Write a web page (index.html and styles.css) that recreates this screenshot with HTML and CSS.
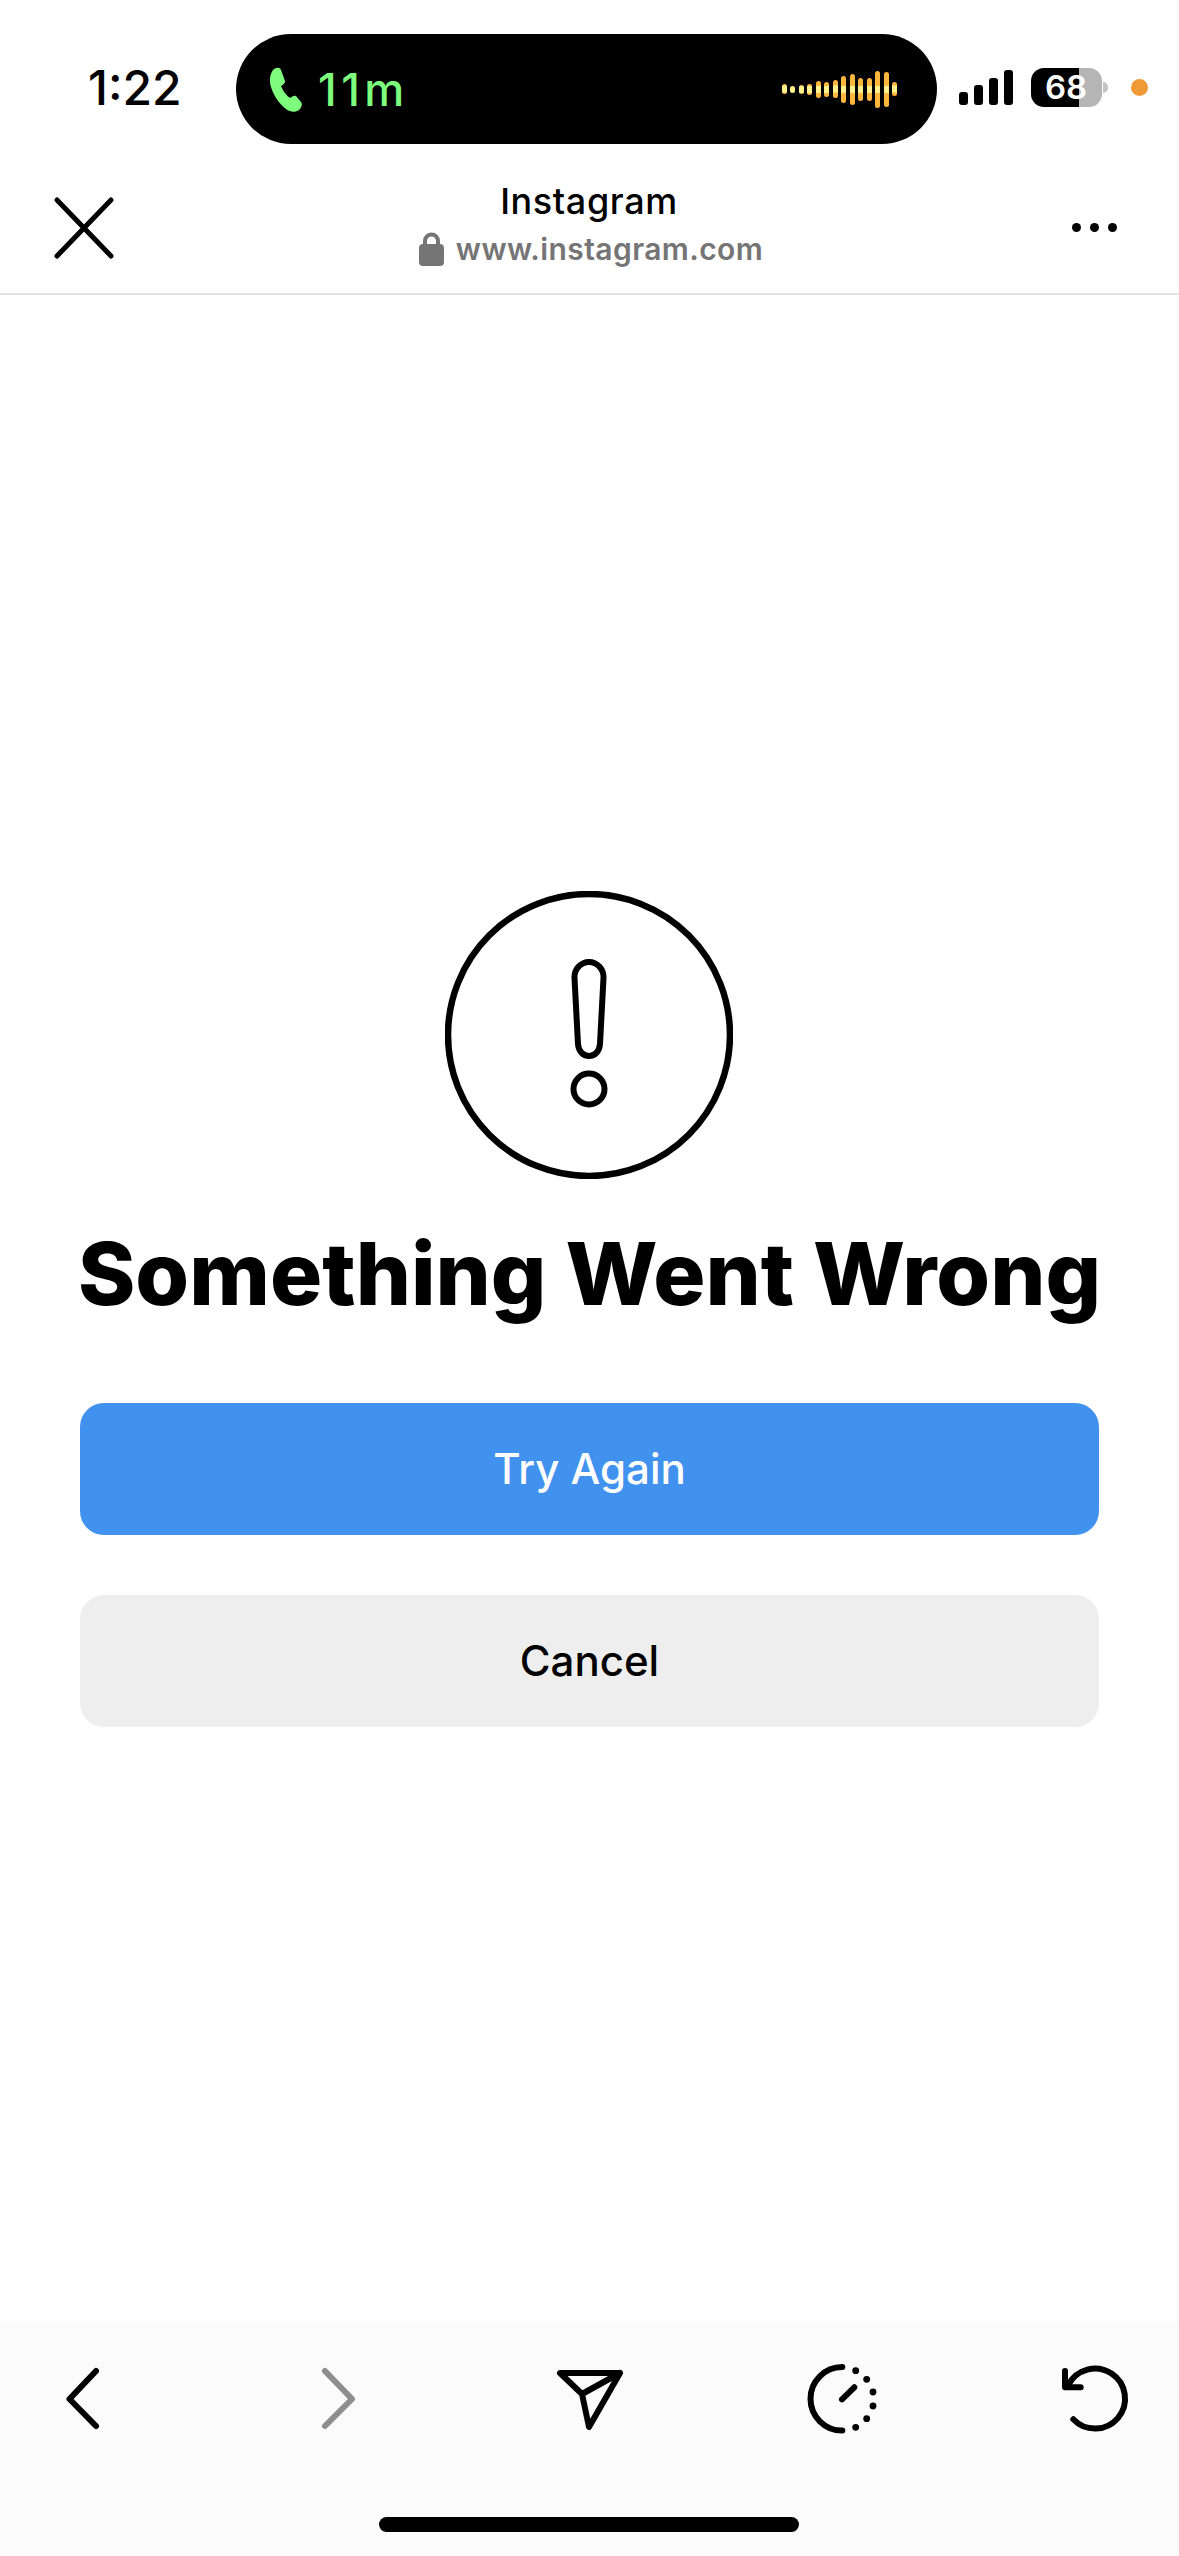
FILE: index.html
```html
<!DOCTYPE html>
<html lang="en">
<head>
  <meta charset="UTF-8">
  <title>Instagram - Something Went Wrong</title>
  <link rel="stylesheet" href="styles.css">
</head>
<body>

<!-- Status bar -->
<div class="status">
  <span class="time">1:22</span>
  <div class="island">
    <svg class="phone" width="32" height="45" viewBox="0 0 32 45">
      <path d="M3 3C6 0 10 0 11 3L15 14C15.500 16 13 18 11 19C13 24 17 29 20 31C22 30 24 28 26 29L31 35C33 38 31 41 29 43C25 46 20 45 16 42C8 36 2 26 0 16C-.5 10 1 6 3 3Z" fill="#7dfc7d"/>
    </svg>
    <span class="call-time">11m</span>
    <div class="wave">
      <span style="height:10px"></span>
      <span style="height:7px"></span>
      <span style="height:9px"></span>
      <span style="height:11px"></span>
      <span style="height:17px"></span>
      <span style="height:15px"></span>
      <span style="height:18px"></span>
      <span style="height:27px"></span>
      <span style="height:31px"></span>
      <span style="height:23px"></span>
      <span style="height:23px"></span>
      <span style="height:37px"></span>
      <span style="height:35px"></span>
      <span style="height:14px"></span>
    </div>
  </div>
  <div class="signal">
    <span class="s1"></span>
    <span class="s2"></span>
    <span class="s3"></span>
    <span class="s4"></span>
  </div>
  <div class="battery">
    <div class="battery-body"><span class="battery-level">68</span></div>
    <div class="battery-nub"></div>
  </div>
  <span class="mic-dot"></span>
</div>

<!-- Browser header -->
<div class="header">
  <svg class="close" width="60" height="62" viewBox="0 0 60 62">
    <path d="M3 3L57 59M57 3L3 59" fill="none" stroke="#000" stroke-width="5" stroke-linecap="round"/>
  </svg>
  <div class="page-info">
    <div class="page-title">Instagram</div>
    <div class="page-url">
      <svg width="25" height="34" viewBox="0 0 25 34">
        <path d="M6 14V9A6.500 6.500 0 0 1 19 9V14" fill="none" stroke="#757575" stroke-width="4"/>
        <rect y="12" width="25" height="22" rx="4" fill="#757575"/>
      </svg>
      <span>www.instagram.com</span>
    </div>
  </div>
  <div class="more">
    <span></span>
    <span></span>
    <span></span>
  </div>
</div>

<!-- Error message -->
<div class="content">
  <svg class="alert" width="288" height="288" viewBox="0 0 288 288">
    <g fill="none" stroke="#000">
      <circle cx="144" cy="144" r="141" stroke-width="6.500"/>
      <path d="M144 71C152 71 159 78 158.500 87L155 153C154.500 160 150 165 144 165C138 165 133.500 160 133 153L129.500 87C129 78 136 71 144 71Z" stroke-width="6"/>
      <circle cx="144" cy="198" r="15.500" stroke-width="6"/>
    </g>
  </svg>
  <h1>Something Went Wrong</h1>
  <button class="btn btn-primary">Try Again</button>
  <button class="btn btn-secondary">Cancel</button>
</div>

<!-- Browser toolbar -->
<div class="toolbar">
  <div class="tools">
    <svg width="80" height="80" viewBox="0 0 80 80">
      <path d="M53 13L26.500 41L53 68" class="line"/>
    </svg>
    <svg width="80" height="80" viewBox="0 0 80 80">
      <path d="M29 13L56 41L29 68" class="line line-off"/>
    </svg>
    <svg width="80" height="80" viewBox="0 0 80 80">
      <path d="M11 15H71L40 69L33 36ZM33 36L71 15" class="line"/>
    </svg>
    <svg width="80" height="80" viewBox="0 0 80 80">
      <path d="M40.300 9A31.800 31.800 0 0 0 40.300 72.600M40 41.300L52.300 29.300" class="line"/>
      <circle cx="53.700" cy="12.700" r="3.400"/>
      <circle cx="64.700" cy="21.300" r="3.400"/>
      <circle cx="71" cy="34" r="3.400"/>
      <circle cx="71" cy="48" r="3.400"/>
      <circle cx="64.700" cy="60.700" r="3.400"/>
      <circle cx="53.700" cy="69.300" r="3.400"/>
    </svg>
    <svg width="80" height="80" viewBox="0 0 80 80">
      <path d="M13.300 27A30 30 0 1 1 18.300 61.300M10 13V29.300H25.700" class="line"/>
    </svg>
  </div>
  <div class="home-bar"></div>
</div>

</body>
</html>
```

FILE: styles.css
```css
* {
  box-sizing: border-box;
}
body {
  margin: 0;
  width: 1179px;
  height: 2556px;
  display: flex;
  flex-direction: column;
  font-family: 'Inter', sans-serif;
  background: #fff;
  color: #000;
}

/* status bar */
.status {
  height: 144px;
  padding: 34px 0 0 88px;
  display: flex;
  align-items: flex-start;
}
.time {
  width: 148px;
  margin-top: 26px;
  font-size: 48px;
  font-weight: 500;
  line-height: 56px;
}
.island {
  width: 701px;
  height: 110px;
  padding: 0 40px 0 34px;
  display: flex;
  align-items: center;
  background: #000;
  border-radius: 55px;
}
.phone {
  margin-right: 16px;
}
.call-time {
  color: #7dfc7d;
  font-size: 45px;
  font-weight: 500;
  letter-spacing: 4.500px;
}
.wave {
  margin-left: auto;
  display: flex;
  align-items: center;
  gap: 3.500px;
}
.wave span {
  width: 5px;
  border-radius: 3px;
  background: linear-gradient(#ffb63d, #ffb63d calc(50% - 4px), #fff08c calc(50% - 3px), #fff08c calc(50% + 3px), #ffb63d calc(50% + 4px));
}
.signal {
  height: 35px;
  margin: 36px 0 0 22px;
  display: flex;
  align-items: flex-end;
  gap: 6px;
}
.signal span {
  width: 9px;
  background: #000;
  border-radius: 3px;
}
.s1 { height: 13px; }
.s2 { height: 20px; }
.s3 { height: 27px; }
.s4 { height: 35px; }
.battery {
  margin: 34px 0 0 18px;
  display: flex;
  align-items: center;
}
.battery-body {
  width: 71px;
  height: 39px;
  padding-left: 14px;
  border-radius: 13px;
  background: linear-gradient(to right, #000 48px, #b5b5b5 48px);
}
.battery-level {
  color: #fff;
  font-size: 33px;
  font-weight: 600;
  line-height: 39px;
}
.battery-nub {
  width: 5px;
  height: 11px;
  margin-left: 1px;
  background: #c4c4c4;
  border-radius: 0 6px 6px 0;
}
.mic-dot {
  width: 17px;
  height: 17px;
  margin: 45px 0 0 23px;
  background: #f09a37;
  border-radius: 50%;
}

/* browser header */
.header {
  height: 151px;
  padding: 0 62px 0 54px;
  display: flex;
  align-items: center;
  justify-content: space-between;
  border-bottom: 2px solid #e2e2e2;
}
.close {
  margin-top: 18px;
}
.page-info {
  margin-top: 10px;
  text-align: center;
}
.page-title {
  font-size: 36px;
  font-weight: 500;
  letter-spacing: .6px;
  line-height: 42px;
}
.page-url {
  margin-top: 8px;
  padding-left: 4px;
  display: flex;
  align-items: center;
  gap: 12px;
  color: #757575;
  font-size: 30px;
  font-weight: 600;
  letter-spacing: .4px;
  line-height: 38px;
}
.more {
  margin: 18px 0 0 8px;
  display: flex;
  gap: 9px;
}
.more span {
  width: 9px;
  height: 9px;
  background: #000;
  border-radius: 50%;
}

/* error message */
.content {
  flex: 1;
  padding: 0 80px;
  display: flex;
  flex-direction: column;
  align-items: center;
  justify-content: center;
}
.alert {
  margin-right: 2px;
}
h1 {
  margin: 41px 0 0;
  font-size: 87px;
  font-weight: 800;
  line-height: 108px;
  white-space: nowrap;
}
.btn {
  width: 100%;
  height: 132px;
  border: none;
  border-radius: 24px;
  font-family: 'Inter', sans-serif;
  font-size: 42px;
  font-weight: 500;
}
.btn-primary {
  margin-top: 75px;
  background: #4192ef;
  color: #fff;
}
.btn-secondary {
  margin-top: 60px;
  background: #eeeeee;
  color: #000;
}

/* browser toolbar */
.toolbar {
  height: 234px;
  padding: 36px 44px 0 43px;
  display: flex;
  flex-direction: column;
  align-items: center;
  background: #fbfbfb;
}
.tools {
  width: 100%;
  display: flex;
  justify-content: space-between;
}
.line {
  fill: none;
  stroke: #000;
  stroke-width: 6;
  stroke-linecap: round;
  stroke-linejoin: round;
}
.line-off {
  stroke: #8e8e8e;
}
.home-bar {
  width: 420px;
  height: 15px;
  margin-top: 79px;
  background: #000;
  border-radius: 8px;
}
```
